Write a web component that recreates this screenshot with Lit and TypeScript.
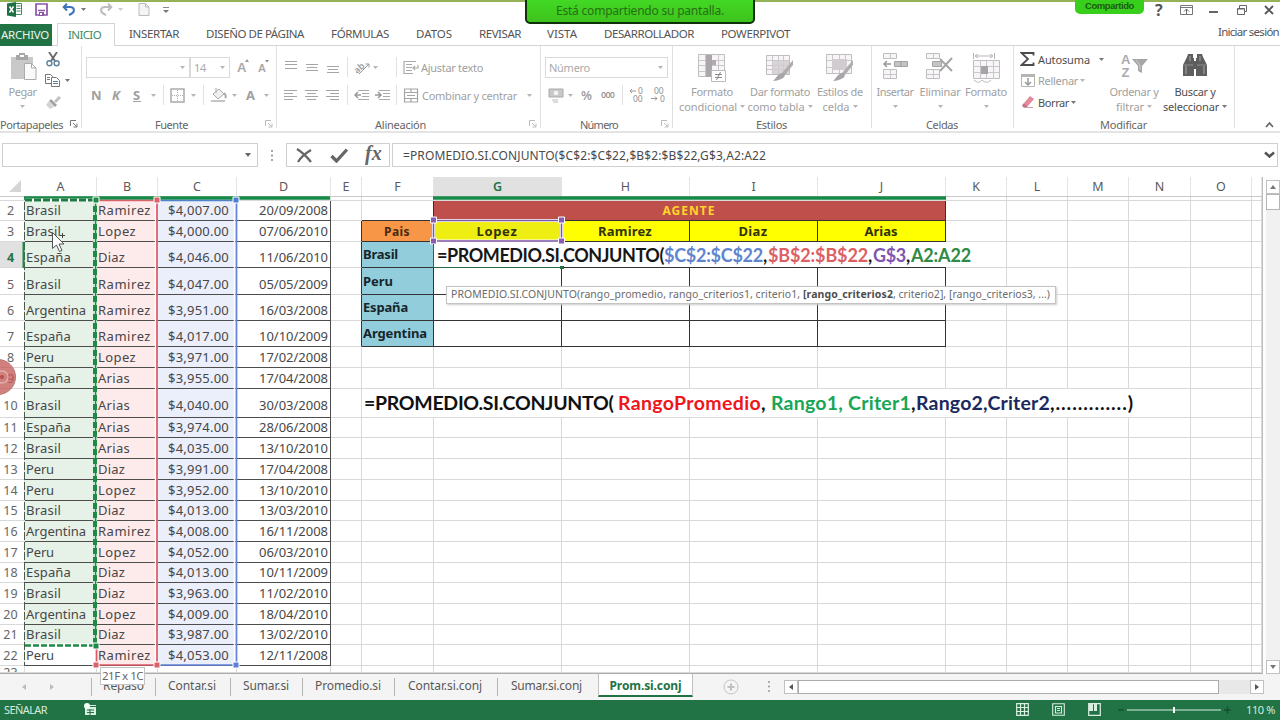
import { LitElement, html, svg, css, nothing } from "lit";
import { customElement } from "lit/decorators.js";

type Item = [number, number, unknown];

/** Lays items in a grid whose tracks come from their [x, width] data. */
const strip = (cls: string, items: Item[], x0 = 0) => {
  let at = x0;
  const cols: string[] = [];
  for (const [x, w] of items) {
    cols.push(`${x - at}px`, `${w}px`);
    at = x + w;
  }
  return html`<div class="strip ${cls}" style="grid-template-columns:${cols.join(" ")}">
    ${items.map(([, , c], i) => html`<div class="slot" style="grid-column:${2 * i + 2}">${c}</div>`)}
  </div>`;
};

const t = (w: number, text: string, cls = "") => html`<span class="fit ${cls}" data-w=${w}>${text}</span>`;
const tx = (x: number, w: number, text: string, cls = ""): Item => [x, w, t(w, text, cls)];
const ic = (w: number, h: number, body: unknown) =>
  html`<svg width=${w} height=${h} viewBox="0 0 ${w} ${h}" fill="none">${body}</svg>`;
const arrow = (c = "#b5b5b5") => ic(5, 3, svg`<path d="M0 0h5L2.5 3z" fill=${c} />`);
const sep = html`<div class="vsep"></div>`;

const launcher = (c: string) =>
  ic(8, 8, svg`<path d="M.5 6V.5H6M3 3l3.500 3.500M7 3.500V7H3.500" stroke=${c} />`);

const lines = (a: number[][]) =>
  ic(14, 14, a.map(([x, y, w]) => svg`<path d="M${x} ${y}.5h${w}" stroke="#a4a4a4" />`));

const big = (icon: unknown, l1: unknown, l2: unknown, cls = "") => html`<div class="big ${cls}">
  <div class="bigicon">${icon}</div>
  <div class="bigline">${l1}</div>
  <div class="bigline">${l2}</div>
</div>`;

const iPaste = ic(28, 32, svg`
  <path d="M2 5h22v22H2z" fill="#c9c9c9" /><path d="M7 3h3V1h6v2h3v5H7z" fill="#a6a6a6" /><path d="M11 3h4v2h-4z" fill="#fff" />
  <path d="M15.500 11.500h7l4.500 4.500v11.500H15.500z" fill="#fafafa" stroke="#ababab" /><path d="M22.500 11.500v4.500H27" stroke="#ababab" />`);
const iCut = ic(14, 15, svg`<path d="M3 0l6 9M11 0L5 9" stroke="#666" stroke-width="1.800" />
  <circle cx="3.400" cy="11.200" r="2.500" stroke="#5c8298" stroke-width="1.400" /><circle cx="10.600" cy="11.200" r="2.500" stroke="#5c8298" stroke-width="1.400" />`);
const iCopy = ic(15, 15, svg`<path d="M.5 1.500h5l2 2v7h-7z" stroke="#777" /><path d="M2 4.500h3M2 6.500h3" stroke="#777" />
  <path d="M6.500 4.500h5l3 3v6h-8z" fill="#fff" stroke="#777" /><path d="M8 8.500h5M8 10.500h5" stroke="#5c8298" />`);
const iBrush = ic(15, 13, svg`<path d="M14 1L9 6" stroke="#c0c0c0" stroke-width="3" /><path d="M5 3l6 6-2 2-6-6z" fill="#a0a0a0" /><path d="M3 5l5 6-4 2-4-4z" fill="#d4d4d4" />`);
const brush = svg`<path d="M28 8v5l-8 10-3-2z" fill="#b0adb0" /><path d="M17 21c3 0 4 3 1 5-3 2-7 3-10 3 3-2 4-7 9-8z" fill="#a8a5a8" />`;
const grid = (x: number, y: number, w: number, h: number, nx: number, ny: number) => svg`
  <path d="M${x} ${y}h${w}v${h}h${-w}z" fill="#f7f5f7" stroke="#c0bdc0" />
  ${Array.from({ length: nx - 1 }, (_, i) => svg`<path d="M${x + Math.round((w * (i + 1)) / nx)} ${y}v${h}" stroke="#cac7ca" />`)}
  ${Array.from({ length: ny - 1 }, (_, i) => svg`<path d="M${x} ${y + Math.round((h * (i + 1)) / ny)}h${w}" stroke="#cac7ca" />`)}`;
const iCond = ic(30, 32, svg`${grid(1.5, 2.5, 26, 22, 4, 4)}<path d="M9 3h6v22H9z" fill="#aaa6a9" /><path d="M15 8h4v5h-4z" fill="#b0abae" />
  <path d="M14.500 18.500h14v11h-14z" fill="#fff" stroke="#bbb" /><path d="M18 22.500h7M18 25.500h7M23.500 20l-4 8" stroke="#888" />`);
const iTable = ic(30, 32, svg`${grid(1.5, 3.5, 23, 19, 4, 4)}<path d="M7 9h17v13H7z" fill="#d0ccd0" opacity=".8" />${brush}`);
const iStyles = ic(30, 32, svg`${grid(1.5, 2.5, 25, 19, 4, 3)}<path d="M7 7h15v11H7z" fill="#d0ccd0" />${brush}`);
const iIns = ic(28, 30, svg`${grid(2.5, 1.5, 13, 5, 2, 1)}${grid(2.5, 17.5, 13, 9, 2, 2)}<path d="M13.500 9.500h13v5h-13z" fill="#c4c4c4" stroke="#a5a5a5" />
  <path d="M20 9v6" stroke="#999" /><path d="M3 12h7M6 9l-3 3 3 3" stroke="#999" stroke-width="1.500" />`);
const iDel = ic(28, 30, svg`${grid(0.5, 1.5, 13, 5, 2, 1)}${grid(0.5, 17.5, 13, 9, 2, 2)}<path d="M6.500 9.500h9v5h-9z" fill="#c4c4c4" stroke="#a5a5a5" />
  <path d="M14 7l12 12M26 6L14 19" stroke="#a5a5a5" stroke-width="2" />`);
const iFmt = ic(28, 32, svg`<path d="M1.500 1v6M22.500 1v6M3 4h18M6 2L3 4l3 2M18 2l3 2-3 2" stroke="#b5b5b5" />${grid(1.5, 8.5, 26, 18, 4, 3)}
  <path d="M9 14h7v8H9z" fill="#a5a5a5" /><path d="M2 28c3 3 6 3 8 0 3 3 6 3 9 0" stroke="#bbb" />`);
const iSort = ic(28, 28, svg`<path d="M12 7h16l-6 7v7l-4-2v-5z" fill="#a6a6a6" /><path d="M16 8l4 5v5" stroke="#d0d0d0" />
  <text x="1" y="11.500" class="az">A</text><text x="1.500" y="25" class="az">Z</text>`);
const iFind = ic(26, 26, svg`<path d="M6 2h5v4h1v18H1V13l4-8zM20 2h-5v4h-1v18h11V13l-4-8z" fill="#5e5e5e" /><path d="M11 9h4v8h-4z" fill="#5e5e5e" />
  <path d="M4 14v8M22 14v8M8 4v5M18 4v5" stroke="#a8a8a8" /><path d="M1 13h10M15 13h10" stroke="#8d8d8d" />`);

const iXl = ic(15, 15, svg`<path d="M8 1.500h6.500v11H8z" fill="#fff" stroke="#3b8a5a" /><path d="M9.500 4h4M9.500 6.500h4M9.500 9h4" stroke="#3b8a5a" />
  <path d="M0 1.500L9 0v15l-9-1.500z" fill="#1f7145" /><path d="M2.500 4.500l4 6M6.500 4.500l-4 6" stroke="#fff" stroke-width="1.500" />`);
const iSave = ic(13, 13, svg`<path d="M1 1h11v11H1z" stroke="#8a55a8" stroke-width="1.700" /><path d="M3 7.500h7" stroke="#8a55a8" stroke-width="1.500" /><path d="M4 9h5v4H4z" fill="#8a55a8" /><path d="M5 10h2v2H5z" fill="#fff" />`);
const undo = (c: string, flip = false) => ic(13, 13, svg`<g transform=${flip ? "translate(13 0) scale(-1 1)" : ""}>
  <path d="M2 4h6c5 0 5 5 1 7l-2 1M5 .7L1.700 4 5 7.500" stroke=${c} stroke-width="2" /></g>`);
const iPage = ic(12, 13, svg`<path d="M1 .5h6.500L11 4v8.500H1z" fill="#f4f4f4" stroke="#bbb" /><path d="M7.500 .5V4H11" stroke="#bbb" />`);

const TABS: [number, number, string][] = [
  [129, 50, "INSERTAR"], [206, 98, "DISEÑO DE PÁGINA"], [331, 58, "FÓRMULAS"], [416, 36, "DATOS"],
  [479, 42, "REVISAR"], [547, 30, "VISTA"], [604, 90, "DESARROLLADOR"], [721, 69, "POWERPIVOT"],
];

const COLS = [25, 97, 158, 237, 331, 362, 434, 562, 690, 818, 946, 1007, 1068, 1129, 1191, 1252, 1262];
const LET = "ABCDEFGHIJKLMNO";
const ENDS = [221, 242, 268, 295, 321, 347, 368, 389, 418, 438, 459, 480, 501, 521, 542, 563, 583, 604, 625, 645, 666, 673];
const DATA = `Brasil|Ramirez|$4,007.00|20/09/2008
Brasil|Lopez|$4,000.00|07/06/2010
España|Diaz|$4,046.00|11/06/2010
Brasil|Ramirez|$4,047.00|05/05/2009
Argentina|Ramirez|$3,951.00|16/03/2008
España|Ramirez|$4,017.00|10/10/2009
Peru|Lopez|$3,971.00|17/02/2008
España|Arias|$3,955.00|17/04/2008
Brasil|Arias|$4,040.00|30/03/2008
España|Arias|$3,974.00|28/06/2008
Brasil|Arias|$4,035.00|13/10/2010
Peru|Diaz|$3,991.00|17/04/2008
Peru|Lopez|$3,952.00|13/10/2010
Brasil|Diaz|$4,013.00|13/03/2010
Argentina|Ramirez|$4,008.00|16/11/2008
Peru|Lopez|$4,052.00|06/03/2010
España|Diaz|$4,013.00|10/11/2009
Brasil|Diaz|$3,963.00|11/02/2010
Argentina|Lopez|$4,009.00|18/04/2010
Brasil|Diaz|$3,987.00|13/02/2010
Peru|Ramirez|$4,053.00|12/11/2008`.split("\n").map((r) => r.split("|"));
const WIDTHS: Record<string, number> = {
  Brasil: 35, España: 45, Argentina: 60, Peru: 28, Ramirez: 53, Lopez: 38, Diaz: 27, Arias: 32,
};
const COUNTRIES: Record<number, [string, number]> = { 4: ["Brasil", 35], 5: ["Peru", 30], 6: ["España", 45], 7: ["Argentina", 64] };
const AGENTS: [string, number][] = [["Lopez", 41], ["Ramirez", 54], ["Diaz", 29], ["Arias", 33]];

@customElement("app-root")
export class AppRoot extends LitElement {
  static styles = css`
    :host { display: block; width: 1280px; height: 720px; overflow: hidden; background: #fff; font-family: "Noto Sans", "Open Sans", sans-serif; color: #555; }
    * { box-sizing: border-box; }
    svg { display: block; flex: none; }
    .app { display: flex; flex-direction: column; height: 720px; position: relative; overflow: hidden; }
    .fit { display: inline-block; white-space: pre; flex: none; }
    .strip { display: grid; grid-template-rows: 100%; }
    .slot { display: flex; align-items: center; min-width: 0; height: 100%; white-space: nowrap; }
    .title { height: 23px; flex: none; border-top: 2px solid #94b356; }
    .title .strip { height: 15px; }
    .badge { position: absolute; text-align: center; color: #256f14; }
    .share { left: 525px; top: -6px; width: 230px; height: 30px; border: 2px solid #10300a; border-radius: 5px; background: linear-gradient(#43dc25, #3ec31d); font-size: 12px; line-height: 29px; }
    .shared { left: 1075px; top: -4px; width: 69px; height: 18px; border-radius: 5px; background: #37cf1c; font: bold 9.500px/20px "Liberation Sans", sans-serif; color: #1c5b12; }
    .tabs { height: 23px; flex: none; border-bottom: 1px solid #d4d4d4; font-size: 11.500px; color: #555; }
    .tabs .strip { height: 23px; }
    .lift { padding-bottom: 2px; }
    .up { padding-bottom: 6px; }
    .file { display: flex; width: 52px; height: 22px; background: #217346; color: #e8f3ec; align-items: center; padding-left: 1px; }
    .inicio { display: flex; width: 58px; height: 23px; border: 1px solid #d4d4d4; border-bottom: 0; background: #fff; color: #3d8a5d; align-items: center; justify-content: center; padding: 0 3px 2px 0; }
    .ribbon { height: 87px; flex: none; display: flex; border-bottom: 2px solid #e4e4e4; font-size: 11px; color: #a0a0a0; }
    .group { display: flex; flex-direction: column; padding-top: 2px; flex: none; border-right: 1px solid #e0e0e0; height: 82px; }
    .body { height: 69px; display: flex; flex: none; }
    .foot { height: 14px; color: #666; flex: none; }
    .collapse { height: 14px; margin-top: 72px; }
    .stack { display: flex; flex-direction: column; flex: none; }
    .g1 { width: 82px; } .g2 { width: 195px; } .g3 { width: 264px; } .g4 { width: 132px; }
    .g5 { width: 199px; } .g6 { width: 142px; } .g7 { width: 221px; }
    .cbody { display: flex; flex-direction: column; height: 69px; flex: none; padding-top: 9px; }
    .r1 { height: 20px; } .r2 { height: 20px; margin-top: 8px; }
    .s1 { height: 22px; } .s2 { height: 21px; } .s3 { height: 22px; }
    .combo { display: flex; flex: none; width: 100%; height: 21px; border: 1px solid #dadada; align-items: center; justify-content: space-between; padding: 0 4px 0 3px; color: #aaa; }
    .big { display: flex; flex-direction: column; flex: none; }
    .bigicon { height: 36px; display: flex; justify-content: center; padding-top: 4px; }
    .bigline { height: 15px; display: flex; justify-content: center; align-items: center; gap: 3px; }
    .w46 { width: 45px; } .w66 { width: 66px; margin-left: 6px; } .w64 { width: 70px; } .w50 { width: 50px; }
    .w43 { width: 44px; margin-left: 1px; } .w44 { width: 46px; } .w47 { width: 46px; } .w60 { width: 60px; } .w62 { width: 62px; }
    .vsep { width: 1px; height: 20px; background: #e2e2e2; }
    .dark { color: #4e4e4e; }
    .bold { font-weight: 700; }
    .glyph { font-weight: 700; font-size: 13px; }
    .semi { font-weight: 600; font-size: 12.500px; }
    .under { text-decoration: underline; }
    .ital { font-style: italic; }
    .az { font: bold 13px "Liberation Sans", sans-serif; fill: #aaa; }
    .azs { font: bold 11px "Liberation Sans", sans-serif; fill: #aaa; }
    .tiny { font: 8.500px "Noto Sans", sans-serif; fill: #909090; }
    .mini { font: 600 9px "Noto Sans", sans-serif; fill: #999; }
    .fbar { height: 44px; flex: none; padding: 10px 2px 10px 2px; display: flex; }
    .box { height: 24px; border: 1px solid #cfcfcf; display: flex; align-items: center; flex: none; }
    .name { width: 256px; justify-content: flex-end; padding-right: 6px; }
    .dots { width: 28px; display: flex; align-items: center; justify-content: center; }
    .fx { width: 104px; gap: 17px; padding-left: 9px; margin-right: 2px; }
    .input { width: 886px; padding: 0 2px 0 10px; font-size: 12px; color: #4a4a4a; justify-content: space-between; }
    .fxt { font: italic bold 20px "Liberation Serif", serif; fill: #666; }
    .work { display: flex; height: 497px; flex: none; }
    .sheet { width: 1263px; flex: none; border-right: 1px solid #bdbdbd; border-bottom: 1px solid #ababab; overflow: hidden; position: relative; }
    .heads { height: 20px; font-size: 12.500px; border-bottom: 1px solid #c8c8c8; }
    .heads .slot { border-right: 1px solid #e4e4e4; justify-content: center; color: #5a5a5a; }
    .on { display: flex; width: 100%; height: 100%; background: #e1e1e1; color: #217346; font-weight: 600; align-items: center; justify-content: center; }
    .cells { display: grid; font-size: 13px; color: #474747; }
    .c { border-right: 1px solid #d9d9d9; border-bottom: 1px solid #d9d9d9; min-width: 0; display: flex; align-items: flex-end; line-height: 19px; padding: 0 2px 0 1px; white-space: nowrap; }
    .rh { justify-content: center; padding-right: 4px; color: #666; font-size: 12.500px; border-right-color: #e0e0e0; }
    .rsel { background: #e1e1e1; color: #217346; font-weight: 700; }
    .top { align-items: flex-start; line-height: 14px; overflow: hidden; }
    .low { padding-bottom: 2px; }
    .d { border-bottom-color: #4d4d4d; }
    .ca { background: #e6f2e8; }
    .ca.plain { background: #fff; }
    .cb { background: #fdebec; }
    .cc { background: #ebeefb; justify-content: flex-end; padding-right: 7px; }
    .cd { justify-content: flex-end; border-right-color: #4d4d4d; padding-right: 2px; }
    .k { border-color: #333; }
    .kr { border-right-color: #333; }
    .mid { align-items: center; }
    .band { background: #bf4f4b; color: #ffd52a; font-weight: 700; justify-content: center; font-size: 12px; grid-column: 8 / span 4; }
    .pais { background: #f79646; color: #4a2a12; font-weight: 700; font-size: 12px; justify-content: center; }
    .country { background: #92cddc; color: #17262b; font-weight: 700; }
    .agent { background: #ff0; color: #33330a; font-weight: 700; font-size: 13px; justify-content: center; }
    .agent.ref { background: #efee12; }
    .edit { grid-column: 8 / span 5; background: #fff; align-items: center; padding: 0 0 0 3px; font: bold 18px/26px Lato, "Open Sans", sans-serif; color: #171717; border-bottom-color: #d9d9d9; }
    .note { grid-column: 7 / span 9; align-items: center; padding-left: 2px; font: bold 19.500px/28px Lato, "Open Sans", sans-serif; color: #111; }
    .blue { color: #6184cf; } .red { color: #dd5f64; } .purple { color: #8056b0; } .green { color: #2f8a45; }
    .nred { color: #ee151b; } .ngreen { color: #17a654; } .navy { color: #1b2a5e; }
    .overlay { position: absolute; left: 0; top: 0; }
    .tip { position: absolute; left: 446px; top: 286px; width: 610px; height: 18px; background: #fff; border: 1px solid #c4c4c4; box-shadow: 1px 1px 2px #ccc; font-size: 10.500px; line-height: 15px; padding-left: 4px; color: #6b6b6b; white-space: nowrap; display: flex; }
    .size { position: absolute; left: 100px; top: 667px; width: 45px; height: 18px; background: #fff; border: 1px solid #c4c4c4; font-size: 11.500px; line-height: 16px; padding-left: 1px; color: #666; }
    .vbar { flex: 1; padding: 3px 0 0 3px; display: flex; flex-direction: column; background: #fdfdfd; }
    .sb { width: 14px; height: 14px; border: 1px solid #c0c0c0; background: #fff; display: flex; align-items: center; justify-content: center; flex: none; }
    .track { flex: 1; width: 14px; background: #f1f1f1; }
    .thumb { width: 14px; height: 16px; border: 1px solid #b4b4b4; background: #fff; }
    .sheets { height: 26px; flex: none; background: #f4f4f4; font-size: 12px; color: #595959; }
    .sheets .strip { height: 25px; }
    .stab { display: flex; align-items: center; justify-content: center; width: 95px; height: 23px; margin-bottom: 2px; padding-top: 1px; background: #fff; border: 1px solid #c2c2c2; border-top: 0; border-bottom: 2px solid #217346; color: #217346; font-weight: 700; }
    .ts { width: 1px; height: 18px; background: #b5b5b5; }
    .hs { display: flex; width: 480px; background: #e8e8e8; height: 14px; }
    .hthumb { width: 421px; height: 14px; background: #fff; border: 1px solid #ababab; margin-right: auto; }
    .status { height: 21px; flex: none; background: #217346; color: #d7ead9; font-size: 11px; border-bottom: 1px solid #4f7048; }
    .status .strip { height: 19px; }
  `;

  private fitLabels() {
    this.renderRoot.querySelectorAll<HTMLElement>(".fit").forEach((el) => {
      const target = Number(el.dataset.w);
      el.style.letterSpacing = "0";
      const step = (target - el.getBoundingClientRect().width) / Math.max(1, (el.textContent ?? "").length);
      el.style.letterSpacing = `${step}px`;
    });
  }

  firstUpdated() {
    this.fitLabels();
  }

  private ribbon() {
    const d = "#777";
    return html`<div class="ribbon">
      <div class="group g1">
        <div class="body">
          ${big(iPaste, t(28, "Pegar"), arrow(), "w46")}
          <div class="stack">
            ${strip("s1", [[46, 14, iCut]], 45)}
            ${strip("s2", [[45, 15, iCopy], [65, 5, arrow(d)]], 45)}
            ${strip("s3", [[46, 15, iBrush]], 45)}
          </div>
        </div>
        ${strip("foot", [tx(0, 63, "Portapapeles"), [70, 8, launcher(d)]])}
      </div>
      <div class="group g2">
        <div class="cbody">
          ${strip("r1", [
            [86, 104, html`<div class="combo"><span></span>${arrow()}</div>`],
            [190, 40, html`<div class="combo">${t(12, "14")}${arrow()}</div>`],
            [237, 13, ic(13, 18, svg`<text x="0" y="14" class="az">A</text><path d="M8 4l2-3 2 3z" fill="#999" />`)],
            [258, 12, ic(12, 18, svg`<text x="0" y="14" class="azs">A</text><path d="M7 2h4L9 4.500z" fill="#888" />`)],
          ], 82)}
          ${strip("r2", [
            tx(91, 9, "N", "glyph"), tx(112, 8, "K", "glyph ital"), tx(133, 8, "S", "glyph under"), [151, 5, arrow()], [163, 1, sep],
            [170, 15, ic(15, 15, svg`<path d="M1 1h13v13H1z" stroke="#aaa" stroke-width="1.500" /><path d="M7.500 2v11M2 7.500h11" stroke="#b0b0b0" stroke-dasharray="1 1" />`)],
            [191, 5, arrow()], [203, 1, sep],
            [211, 16, ic(16, 16, svg`<path d="M2 7l6-5 5 5-6 5z" stroke="#aaa" fill="#f0f0f0" /><path d="M5 1v5" stroke="#aaa" /><path d="M13 6c2 2 2 4 1 5" stroke="#aaa" stroke-width="2" /><path d="M0 13h14v2H0z" fill="#c5c5c5" />`)],
            [232, 5, arrow()], tx(246, 10, "A", "glyph"), [264, 5, arrow()],
          ], 82)}
        </div>
        ${strip("foot", [tx(155, 33, "Fuente"), [265, 8, launcher("#bbb")]], 82)}
      </div>
      <div class="group g3">
        <div class="cbody">
          ${strip("r1", [
            [284, 14, lines([[1, 1, 12], [1, 4, 12], [1, 8, 12]])], [305, 14, lines([[1, 4, 12], [2, 7, 10], [1, 10, 12]])], [326, 14, lines([[1, 6, 12], [2, 9, 10], [1, 12, 12]])],
            [347, 1, sep],
            [354, 17, ic(17, 16, svg`<text x="-1" y="12" class="mini" transform="rotate(-40 5 8)">ab</text><path d="M5 15L15 5M11.500 5H15v3.500" stroke="#999" />`)],
            [373, 5, arrow()], [396, 1, sep],
            [403, 16, ic(16, 15, svg`<path d="M1 1v13M1 1.500h12M3 4.500h6M3 7.500h6M3 10.500h6M1 13.500h9M15 5v3h-4M12 6l-2 2 2 2" stroke="#aaa" stroke-width="1.200" />`)],
            tx(421, 62, "Ajustar texto"),
          ], 277)}
          ${strip("r2", [
            [284, 14, lines([[0, 2, 13], [0, 5, 9], [0, 8, 13], [0, 11, 9]])], [305, 14, lines([[0, 2, 13], [2, 5, 9], [0, 8, 13], [2, 11, 9]])], [326, 14, lines([[0, 2, 13], [4, 5, 9], [0, 8, 13], [4, 11, 9]])],
            [347, 1, sep],
            [354, 16, ic(16, 12, svg`<path d="M4 1.500h11M8 4.500h7M8 7.500h7M4 10.500h11" stroke="#aaa" /><path d="M7 6H1M4 3L1 6l3 3" stroke="#999" stroke-width="1.500" />`)],
            [375, 16, ic(16, 12, svg`<path d="M4 1.500h11M8 4.500h7M8 7.500h7M4 10.500h11" stroke="#aaa" /><path d="M0 6h6M3 3l3 3-3 3" stroke="#999" stroke-width="1.500" />`)],
            [396, 1, sep],
            [403, 16, ic(16, 15, svg`<path d="M1.500 1h13v13h-13zM1 4.500h14M1 10.500h14M8 1v3M8 11v3M4 7.500h8" stroke="#a5a5a5" stroke-width="1.200" />`)],
            tx(422, 95, "Combinar y centrar"), [527, 5, arrow()],
          ], 277)}
        </div>
        ${strip("foot", [tx(375, 51, "Alineación"), [529, 8, launcher("#bbb")]], 277)}
      </div>
      <div class="group g4">
        <div class="cbody">
          ${strip("r1", [[545, 123, html`<div class="combo">${t(41, "Número")}${arrow()}</div>`]], 541)}
          ${strip("r2", [
            [548, 16, ic(16, 15, svg`<path d="M1 1h14v8H1z" fill="#c9c9c9" stroke="#aaa" /><circle cx="8" cy="5" r="2.300" fill="#f4f4f4" /><path d="M4 12h6M5 14h5" stroke="#bbb" />`)],
            [568, 5, arrow()],
            [581, 12, t(12, "%", "semi")],
            [601, 15, ic(15, 12, svg`<text x="0" y="9" class="mini" textLength="14">000</text>`)],
            [622, 1, sep],
            [629, 16, ic(16, 18, svg`<text x="9" y="8" class="tiny">0</text><text x="4" y="15.500" class="tiny">00</text><path d="M1 5h6M3 3L1 5l2 2" stroke="#999" />`)],
            [651, 16, ic(16, 18, svg`<text x="3" y="8" class="tiny">00</text><text x="9" y="15.500" class="tiny">0</text><path d="M0 12.500h6M4 10.500l2 2-2 2" stroke="#999" />`)],
          ], 541)}
        </div>
        ${strip("foot", [tx(580, 38, "Número"), [661, 8, launcher("#bbb")]], 541)}
      </div>
      <div class="group g5">
        <div class="body">
          ${big(iCond, t(42, "Formato"), html`${t(58, "condicional")}${arrow()}`, "w66")}
          ${big(iTable, t(60, "Dar formato"), html`${t(57, "como tabla")}${arrow()}`, "w64")}
          ${big(iStyles, t(46, "Estilos de"), html`${t(27, "celda")}${arrow()}`, "w50")}
        </div>
        ${strip("foot", [tx(756, 31, "Estilos")], 673)}
      </div>
      <div class="group g6">
        <div class="body">
          ${big(iIns, t(37, "Insertar"), arrow(), "w43")}
          ${big(iDel, t(41, "Eliminar"), arrow(), "w44")}
          ${big(iFmt, t(42, "Formato"), arrow(), "w47")}
        </div>
        ${strip("foot", [tx(926, 32, "Celdas")], 872)}
      </div>
      <div class="group g7">
        <div class="body">
          <div class="stack">
            ${strip("s1 dark", [[1020, 15, ic(15, 14, svg`<path d="M13.500 3.500V1H1.500L8 7l-6.500 6h12v-2.500" stroke="#4c4c4c" stroke-width="1.800" />`)], tx(1038, 52, "Autosuma"), [1099, 5, arrow(d)]], 1014)}
            ${strip("s2", [[1021, 14, ic(14, 15, svg`<path d="M.5 1.500h13v12H.5z" fill="#fff" stroke="#b5b5b5" /><path d="M0 1h14v3H0z" fill="#b5b5b5" /><path d="M7 5v7M4 9l3 3 3-3" stroke="#999" stroke-width="1.500" />`)], tx(1038, 40, "Rellenar"), [1080, 5, arrow()]], 1014)}
            ${strip("s3 dark", [[1022, 13, ic(13, 12, svg`<path d="M8 0l4 3-6 7-4-3z" fill="#e38a9b" /><path d="M2 7l4 3-2 1.500H1.500L0 9.500z" fill="#c96f85" /><path d="M2 11.500h9" stroke="#c7a0aa" />`)], tx(1038, 31, "Borrar"), [1071, 5, arrow(d)]], 1014)}
          </div>
          ${big(iSort, t(49, "Ordenar y"), html`${t(28, "filtrar")}${arrow()}`, "w60")}
          ${big(iFind, t(41, "Buscar y"), html`${t(56, "seleccionar")}${arrow(d)}`, "w62 dark")}
        </div>
        ${strip("foot", [tx(1100, 47, "Modificar")], 1014)}
      </div>
      ${strip("collapse", [[1265, 9, ic(9, 6, svg`<path d="M1 5l3.500-4L8 5" stroke="#666" stroke-width="1.700" />`)]], 1235)}
    </div>`;
  }

  private row(n: number) {
    const data = DATA[n - 2];
    const low = n === 10 ? "low" : "";
    const cell = (cls: string, c: unknown = nothing) => html`<div class="c ${cls}">${c}</div>`;
    const out: unknown[] = [cell(`rh ${low} ${n === 4 ? "rsel" : ""} ${n === 23 ? "top" : ""}`, n)];
    if (data) {
      out.push(
        cell(`d ca ${low} ${n === 22 ? "plain" : ""}`, t(WIDTHS[data[0]], data[0])),
        cell(`d cb ${low}`, t(WIDTHS[data[1]], data[1])),
        cell(`d cc ${low}`, t(61, data[2])),
        cell(`d cd ${low}`, t(69, data[3])),
      );
    } else out.push(cell(""), cell(""), cell(""), cell(""));
    out.push(cell(n >= 3 && n <= 7 ? "kr" : ""));
    const blanks = (k: number, cls = "") => Array.from({ length: k }, () => cell(cls));
    if (n === 2) out.push(cell("k"), cell("k band", t(53, "AGENTE")), blanks(6));
    else if (n === 3) out.push(cell("k pais", t(26, "Pais")), AGENTS.map(([a, w], i) => cell(`k agent ${i ? "" : "ref"}`, t(w, a))), blanks(6));
    else if (n === 4)
      out.push(cell("k country mid", t(35, "Brasil")),
        cell("edit", html`${t(227, "=PROMEDIO.SI.CONJUNTO(")}${t(99, "$C$2:$C$22", "blue")}${t(5, ",")}${t(100, "$B$2:$B$22", "red")}${t(5, ",")}${t(33, "G$3", "purple")}${t(5, ",")}${t(60, "A2:A22", "green")}`), blanks(5));
    else if (n < 8) out.push(cell("k country mid", t(COUNTRIES[n][1], COUNTRIES[n][0])), blanks(4, "k"), blanks(6));
    else if (n === 10)
      out.push(cell("note", html`${t(254, "=PROMEDIO.SI.CONJUNTO( ")}${t(143, "RangoPromedio", "nred")}${t(10, ", ")}${t(140, "Rango1, Criter1", "ngreen")}${t(5, ",")}${t(134, "Rango2,Criter2", "navy")}${t(84, ",.............)")}`), blanks(2));
    else out.push(blanks(11));
    return out;
  }

  private marks() {
    const sq = (x: number, y: number, c: string) => svg`<path d="M${x - 3} ${y - 3}h6v6h-6z" fill=${c} stroke="#fff" />`;
    return html`<svg class="overlay" width="1280" height="720" viewBox="0 0 1280 720" fill="none">
      <path d="M9 192h12v-12z" fill="#d5d5d5" />
      <path d="M24 198h306M433 198h513" stroke="#168a47" stroke-width="3.500" />
      <path d="M96 200.500h61" stroke="#d9636b" stroke-width="1.500" /><path d="M158 200.500h78" stroke="#4f82c8" stroke-width="1.500" />
      <path d="M155.500 202v462M234.500 202v462" stroke="#fff" stroke-width="1.500" />
      <path d="M157 201v464H96.500v-20" stroke="#dc5965" stroke-width="1.700" />
      <path d="M236.500 201v464H158" stroke="#6382d8" stroke-width="1.700" />
      <path d="M95 200v446" stroke="#1e8a45" stroke-width="4" /><path d="M94 203v443" stroke="#fff" stroke-width="1.500" stroke-dasharray="3 6" />
      <path d="M96.700 203v443" stroke="#bfe3ca" stroke-width="1" stroke-dasharray="3 6" />
      <path d="M25 645.500h71" stroke="#fff" stroke-width="4" /><path d="M25 645.500h70" stroke="#1e8a45" stroke-width="2.500" stroke-dasharray="6 2" />
      <path d="M25 200h69" stroke="#fff" stroke-width="3" /><path d="M25 200h69" stroke="#1e7a40" stroke-width="3" stroke-dasharray="7 2" />
      <path d="M24.500 202v464" stroke="#4a5a4e" stroke-dasharray="8 2" /><path d="M23.500 242v26" stroke="#1e8a45" stroke-width="2" />
      ${sq(96, 200, "#1e8a45")}${sq(157, 200, "#d9636b")}${sq(236, 200, "#4f7fd0")}
      ${sq(96, 646, "#1e8a45")}${sq(96, 665, "#d9636b")}${sq(157, 665, "#d9636b")}${sq(236, 665, "#5f80d8")}
      <path d="M433.500 220.500h128v20.500h-128z" stroke="#fff" stroke-width="3" /><path d="M433.500 220.500h128v20.500h-128z" stroke="#7d55a8" stroke-width="1.500" />
      ${sq(433.5, 220, "#8a5bb5")}${sq(561.5, 220, "#8a5bb5")}${sq(433.5, 241, "#8a5bb5")}${sq(561.5, 241, "#8a5bb5")}
      <path d="M433.500 244v23.500h128" stroke="#2a6b45" /><path d="M562 267.500h384" stroke="#333" /><path d="M560 266h4v3h-4z" fill="#1e6b40" />
      <circle cx="-2" cy="377" r="17.500" fill="#c45654" stroke="#994b4a" opacity=".75" /><circle cx="2" cy="377" r="6" stroke="#eac0bc" stroke-width="1.500" opacity=".7" /><circle cx="2" cy="377" r="2" fill="#b5504e" />
      <path d="M52.500 232.500v16l4-3.500 3 6.500 2.500-1-3-6.500h5z" fill="#fff" stroke="#555" /><path d="M62.500 233v5M60 235.500h5" stroke="#444" />
    </svg>`;
  }

  render() {
    const cols = COLS.map((x, i) => (i ? x - COLS[i - 1] : x) + "px").join(" ");
    const rows = ["4px", ...ENDS.map((y, i) => `${y - (i ? ENDS[i - 1] : 201)}px`)].join(" ");
    const w = "#d9efdf";
    return html`<div class="app">
      <div class="title">
        ${strip("", [
          [7, 15, iXl], [35, 13, iSave], [62, 13, undo("#3f74b8")], [81, 5, arrow("#777")], [100, 13, undo("#bdbdbd", true)], [118, 5, arrow("#ccc")],
          [138, 12, iPage], [163, 6, ic(6, 6, svg`<path d="M0 .5h6" stroke="#888" /><path d="M0 3h6L3 6z" fill="#777" />`)],
          tx(1155, 8, "?", "bold"),
          [1180, 13, ic(13, 10, svg`<path d="M.5 .5h12v9H.5zM.5 2.500h12" stroke="#777" /><path d="M6.500 9V4M4 6.500L6.500 4 9 6.500" stroke="#666" />`)],
          [1209, 9, ic(9, 10, svg`<path d="M0 7h9" stroke="#666" stroke-width="2" />`)],
          [1237, 10, ic(10, 10, svg`<path d="M2.500 3V.5h7v6H7.500M.5 3.500h7v6h-7zM.5 4h7" stroke="#666" />`)],
          [1264, 10, ic(10, 10, svg`<path d="M1 1l8 8M9 1L1 9" stroke="#555" stroke-width="1.800" />`)],
        ])}
      </div>
      <div class="tabs">
        ${strip("", [
          [0, 52, html`<div class="file">${t(48, "ARCHIVO")}</div>`],
          [57, 58, html`<div class="inicio">${t(33, "INICIO")}</div>`],
          ...TABS.map(([x, ww, s]) => tx(x, ww, s, "lift")), tx(1218, 61, "Iniciar sesión", "up"),
        ])}
      </div>
      ${this.ribbon()}
      <div class="fbar">
        <div class="box name">${ic(6, 4, svg`<path d="M0 0h6L3 4z" fill="#666" />`)}</div>
        <div class="dots">${ic(2, 11, svg`<path d="M0 1h2M0 5.500h2M0 10h2" stroke="#888" stroke-width="1.500" />`)}</div>
        <div class="box fx">
          ${ic(17, 15, svg`<path d="M1 1c5 3 10 8 14 13M15 2C10 5 5 9 2 14" stroke="#666" stroke-width="2.300" />`)}
          ${ic(18, 15, svg`<path d="M1.500 8l5 5L17 1.500" stroke="#666" stroke-width="3.300" />`)}
          ${ic(20, 22, svg`<text x="0" y="16" class="fxt">fx</text>`)}
        </div>
        <div class="box input">${t(363, "=PROMEDIO.SI.CONJUNTO($C$2:$C$22,$B$2:$B$22,G$3,A2:A22")}${ic(11, 8, svg`<path d="M1 1.500l4.500 4 4.500-4" stroke="#555" stroke-width="2.500" />`)}</div>
      </div>
      <div class="work">
        <div class="sheet">
          ${strip("heads", COLS.slice(0, 16).map((x, i) => [x, COLS[i + 1] ? COLS[i + 1] - x : 0, LET[i] === "G" ? html`<div class="on">G</div>` : LET[i] ?? ""] as Item))}
          <div class="cells" style="grid-template-columns:${cols};grid-template-rows:${rows}">
            ${Array.from({ length: 17 }, () => html`<div class="c"></div>`)}
            ${Array.from({ length: 22 }, (_, i) => this.row(i + 2))}
          </div>
        </div>
        <div class="vbar">
          <div class="sb">${ic(6, 4, svg`<path d="M0 4h6L3 0z" fill="#777" />`)}</div>
          <div class="thumb"></div><div class="track"></div>
          <div class="sb">${ic(6, 4, svg`<path d="M0 0h6L3 4z" fill="#777" />`)}</div>
        </div>
      </div>
      <div class="sheets">
        ${strip("", [
          [22, 4, ic(4, 6, svg`<path d="M4 0v6L0 3z" fill="#bbb" />`)], [50, 4, ic(4, 6, svg`<path d="M0 0v6l4-3z" fill="#bbb" />`)],
          [91, 1, html`<div class="ts"></div>`], tx(103, 41, "Repaso", "lift"), [155, 1, html`<div class="ts"></div>`],
          tx(168, 48, "Contar.si", "lift"), [230, 1, html`<div class="ts"></div>`], tx(243, 46, "Sumar.si", "lift"), [302, 1, html`<div class="ts"></div>`],
          tx(315, 66, "Promedio.si", "lift"), [394, 1, html`<div class="ts"></div>`], tx(408, 74, "Contar.si.conj", "lift"), [497, 1, html`<div class="ts"></div>`],
          tx(511, 71, "Sumar.si.conj", "lift"), [598, 95, html`<div class="stab">${t(72, "Prom.si.conj")}</div>`],
          [723, 16, ic(16, 16, svg`<circle cx="8" cy="8" r="7" stroke="#c4c4c4" /><path d="M8 4.500v7M4.500 8h7" stroke="#c0c0c0" stroke-width="2" />`)],
          [768, 2, ic(2, 11, svg`<path d="M0 1h2M0 5.500h2M0 10h2" stroke="#999" stroke-width="1.500" />`)],
          [784, 480, html`<div class="hs"><div class="sb">${ic(4, 6, svg`<path d="M4 0v6L0 3z" fill="#555" />`)}</div><div class="hthumb"></div><div class="sb">${ic(4, 6, svg`<path d="M0 0v6l4-3z" fill="#555" />`)}</div></div>`],
        ])}
      </div>
      <div class="status">
        ${strip("", [
          tx(4, 43, "SEÑALAR"),
          [84, 12, ic(12, 13, svg`<path d="M1 4h11v8H1z" fill=${w} /><circle cx="3" cy="3" r="3" fill="#f0fff4" /><path d="M3 7h7M3 9.500h7M6 6v6" stroke="#217346" /><path d="M6 2.500h6" stroke=${w} />`)],
          [1016, 13, ic(13, 13, svg`<path d="M.7 .7h11.600v11.600H.7zM4.500 0v13M8.500 0v13M0 4.500h13M0 8.500h13" stroke=${w} stroke-width="1.200" />`)],
          [1052, 13, ic(13, 13, svg`<path d="M.7 .7h11.600v11.600H.7zM3.500 3.500h6v6.500h-6zM5 5.500h3M5 7.500h3" stroke=${w} stroke-width="1.100" />`)],
          [1088, 13, ic(13, 13, svg`<path d="M.7 .7h11.600v11.600H.7z" stroke=${w} stroke-width="1.200" /><path d="M1 1h4v7H1zM6 1h3v7H6z" fill=${w} />`)],
          [1117, 115, ic(115, 12, svg`<path d="M1 6h6M107 6h7M110.500 2.500v7" stroke="#12502d" stroke-width="1.500" /><path d="M10 6h94" stroke=${w} stroke-width="1.200" /><path d="M57 3v6" stroke="#fff" stroke-width="2" />`)],
          tx(1246, 29, "110 %"),
        ])}
      </div>
      ${this.marks()}
      <div class="tip">${t(352, "PROMEDIO.SI.CONJUNTO(rango_promedio, rango_criterios1, criterio1, ")}${t(90, "[rango_criterios2", "bold dark")}${t(157, ", criterio2], [rango_criterios3, ...)")}</div>
      <div class="size">${t(41, "21F x 1C")}</div>
      <div class="badge share">${t(168, "Está compartiendo su pantalla.")}</div>
      <div class="badge shared">${t(49, "Compartido")}</div>
    </div>`;
  }
}
